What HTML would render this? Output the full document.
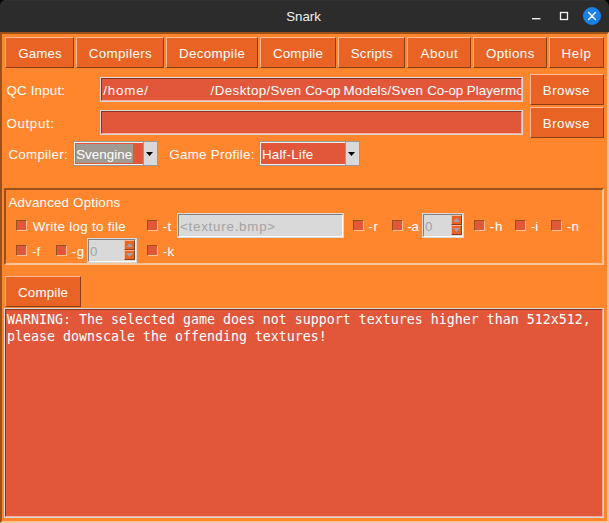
<!DOCTYPE html>
<html lang="en"><head><meta charset="utf-8"><title>Snark</title>
<style>
html,body{margin:0;padding:0;background:#000;}
body{width:609px;height:523px;position:relative;overflow:hidden;font-family:"Liberation Sans",sans-serif;font-size:13.33px;color:#FFFFFF;}
div,span{position:absolute;box-sizing:content-box;}
.t{white-space:pre;line-height:16px;height:16px;}
#tbar{left:0;top:0;width:609px;height:32px;background:#2C2C2C;border-radius:5.5px 6.5px 0 0;}
#tbar:before{content:"";position:absolute;left:4px;right:4px;top:0;height:1px;background:#313131;}
#win{left:0;top:32px;width:605px;height:487px;background:#FF862C;border:2px solid;border-color:#9A5019 #FFC296 #FFC296 #9A5019;}
.btn{background:#E96424;border:1px solid;border-color:#FFB795 #8C3C16 #8C3C16 #FFB795;}
.ent{background:#E2573A;border:1px solid;border-color:#883423 #FFAB9C #FFAB9C #883423;outline:1px solid #D9D9D9;overflow:hidden;}
.dent{background:#D9D9D9;border:1px solid;border-color:#828282 #fff #fff #828282;outline:1px solid #D9D9D9;overflow:hidden;}
.chk{width:9px;height:9px;background:#E2573A;border:1px solid;border-color:#9A5019 #FFC296 #FFC296 #9A5019;}
.sunk{border:2px solid;border-color:#9A5019 #FFC296 #FFC296 #9A5019;}
.cb{background:#E2573A;border:1px solid #F2F2F2;outline:1px solid #989898;}
.cbb{background:#D9D9D9;border-left:1px solid #989898;}
.sb{background:#E96424;border:1px solid;border-color:#FFB795 #8C3C16 #8C3C16 #FFB795;width:9px;height:8px;}
.dis{color:#A3A3A3;}
.mono{font-family:"DejaVu Sans Mono","Liberation Mono",monospace;font-size:13.29px;line-height:17px;white-space:pre;color:#FFFFFF;}
svg{position:absolute;overflow:visible;}
</style></head><body>

<div id="tbar"></div>
<span id="title" class="t" style="left:286.24px;top:9px;letter-spacing:-0.055px;color:#F0F0F0;">Snark</span>
<svg style="left:0;top:0" width="609" height="32" viewBox="0 0 609 32"><rect x="532" y="18" width="8.4" height="1.4" fill="#F0F0F0"/><rect x="560.5" y="12.5" width="7" height="7" fill="none" stroke="#F4F4F4" stroke-width="1.3"/><circle cx="592" cy="16" r="9" fill="#1B80E6"/><path d="M588.6 12.6 L595.4 19.4 M595.4 12.6 L588.6 19.4" stroke="#fff" stroke-width="1.4" stroke-linecap="round" fill="none"/></svg>
<div id="win"></div>
<div class="btn" style="left:5px;top:37px;width:67px;height:29px"></div>
<span id="b1" class="t" style="left:18.18px;top:46px;letter-spacing:0.158px;">Games</span>
<div class="btn" style="left:76px;top:37px;width:86px;height:29px"></div>
<span id="b2" class="t" style="left:88.76px;top:46px;letter-spacing:0.376px;">Compilers</span>
<div class="btn" style="left:166px;top:37px;width:90px;height:29px"></div>
<span id="b3" class="t" style="left:179.12px;top:46px;letter-spacing:0.347px;">Decompile</span>
<div class="btn" style="left:260px;top:37px;width:74px;height:29px"></div>
<span id="b4" class="t" style="left:272.96px;top:46px;letter-spacing:0.178px;">Compile</span>
<div class="btn" style="left:338px;top:37px;width:65px;height:29px"></div>
<span id="b5" class="t" style="left:350.79px;top:46px;letter-spacing:0.177px;">Scripts</span>
<div class="btn" style="left:407px;top:37px;width:62px;height:29px"></div>
<span id="b6" class="t" style="left:420.47px;top:46px;letter-spacing:0.610px;">About</span>
<div class="btn" style="left:473px;top:37px;width:72px;height:29px"></div>
<span id="b7" class="t" style="left:485.91px;top:46px;letter-spacing:0.412px;">Options</span>
<div class="btn" style="left:549px;top:37px;width:53px;height:29px"></div>
<span id="b8" class="t" style="left:561.50px;top:46px;letter-spacing:0.673px;">Help</span>
<span id="l_qc" class="t" style="left:6.39px;top:83px;letter-spacing:0.203px;">QC Input:</span>
<div class="ent" style="left:101px;top:78px;width:419px;height:21px"></div>
<div style="left:102px;top:79px;width:419px;height:21px;overflow:hidden">
<span id="e_home" class="t" style="left:1.24px;top:4px;letter-spacing:0.816px;">/home/</span>
<span class="t" style="left:108.50px;top:4px;letter-spacing:0.438px">/Desktop</span>
<span class="t" style="left:164.60px;top:4px;letter-spacing:0.152px">/Sven </span>
<span class="t" style="left:203.30px;top:4px;letter-spacing:-0.284px">Co-op </span>
<span class="t" style="left:241.60px;top:4px;letter-spacing:0.139px">Models</span>
<span class="t" style="left:285.40px;top:4px;letter-spacing:0.336px">/Sven </span>
<span class="t" style="left:325.20px;top:4px;letter-spacing:-0.084px">Co-op </span>
<span class="t" style="left:364.70px;top:4px;letter-spacing:0.088px">Playermodels</span>
</div>
<div class="btn" style="left:530px;top:74px;width:72px;height:29px"></div>
<span id="br1" class="t" style="left:542.82px;top:83px;letter-spacing:0.442px;">Browse</span>
<span id="l_out" class="t" style="left:6.39px;top:116px;letter-spacing:0.662px;">Output:</span>
<div class="ent" style="left:101px;top:111px;width:419px;height:21px"></div>
<div class="btn" style="left:530px;top:107px;width:72px;height:29px"></div>
<span id="br2" class="t" style="left:542.82px;top:116px;letter-spacing:0.442px;">Browse</span>
<span id="l_comp" class="t" style="left:8.42px;top:147px;letter-spacing:0.278px;">Compiler:</span>
<div class="cb" style="left:74px;top:142px;width:81px;height:21px"></div>
<div style="left:76px;top:144px;width:57px;height:19px;background:#9F9B93"></div>
<span id="c_sv" class="t" style="left:76.14px;top:147px;letter-spacing:0.071px;">Svengine</span>
<div class="cbb" style="left:143px;top:142px;width:13px;height:23px"></div>
<svg style="left:146px;top:152px" width="7" height="4" viewBox="0 0 7 4"><path d="M0 0H7L3.5 4Z" fill="#000"/></svg>
<span id="l_gp" class="t" style="left:169.31px;top:147px;letter-spacing:0.302px;">Game Profile:</span>
<div class="cb" style="left:260px;top:142px;width:97px;height:21px"></div>
<span id="c_hl" class="t" style="left:261.96px;top:147px;letter-spacing:0.211px;">Half-Life</span>
<div class="cbb" style="left:345px;top:142px;width:13px;height:23px"></div>
<svg style="left:348px;top:152px" width="7" height="4" viewBox="0 0 7 4"><path d="M0 0H7L3.5 4Z" fill="#000"/></svg>
<div class="sunk" style="left:4px;top:188px;width:596px;height:73px"></div>
<span id="l_adv" class="t" style="left:8.42px;top:195px;letter-spacing:0.190px;">Advanced Options</span>
<div class="chk" style="left:16px;top:220px"></div>
<span id="k_log" class="t" style="left:32.81px;top:219px;letter-spacing:0.306px;">Write log to file</span>
<div class="chk" style="left:147px;top:220px"></div>
<span id="k_t" class="t" style="left:162.75px;top:219px;letter-spacing:0.430px;">-t</span>
<div class="dent" style="left:178px;top:214px;width:163px;height:21px"></div>
<span id="e_tex" class="t dis" style="left:179.97px;top:219px;letter-spacing:0.769px;">&lt;texture.bmp&gt;</span>
<div class="chk" style="left:353px;top:220px"></div>
<span id="k_r" class="t" style="left:368.49px;top:219px;letter-spacing:0.630px;">-r</span>
<div class="chk" style="left:392px;top:220px"></div>
<span id="k_a" class="t" style="left:407.59px;top:219px;letter-spacing:-0.550px;">-a</span>
<div class="dent" style="left:423px;top:214px;width:38px;height:21px"></div>
<div class="sb" style="left:451px;top:215px"></div>
<div class="sb" style="left:451px;top:225px"></div>
<svg style="left:453px;top:218px" width="7" height="4" viewBox="0 0 7 4"><path d="M0 4H7L3.5 0Z" fill="#A3A3A3"/></svg>
<svg style="left:453px;top:228px" width="7" height="4" viewBox="0 0 7 4"><path d="M0 0H7L3.5 4Z" fill="#A3A3A3"/></svg>
<span id="s_a" class="t dis" style="left:425.07px;top:219px;letter-spacing:0.000px;">0</span>
<div class="chk" style="left:474px;top:220px"></div>
<span id="k_h" class="t" style="left:489.71px;top:219px;letter-spacing:0.760px;">-h</span>
<div class="chk" style="left:515px;top:220px"></div>
<span id="k_i" class="t" style="left:530.84px;top:219px;letter-spacing:0.080px;">-i</span>
<div class="chk" style="left:551px;top:220px"></div>
<span id="k_n" class="t" style="left:566.82px;top:219px;letter-spacing:0.350px;">-n</span>
<div class="chk" style="left:16px;top:245px"></div>
<span id="k_f" class="t" style="left:32.15px;top:244px;letter-spacing:0.040px;">-f</span>
<div class="chk" style="left:56px;top:245px"></div>
<span id="k_g" class="t" style="left:71.84px;top:244px;letter-spacing:0.600px;">-g</span>
<div class="dent" style="left:88px;top:239px;width:46px;height:21px"></div>
<div class="sb" style="left:124px;top:240px"></div>
<div class="sb" style="left:124px;top:250px"></div>
<svg style="left:126px;top:243px" width="7" height="4" viewBox="0 0 7 4"><path d="M0 4H7L3.5 0Z" fill="#A3A3A3"/></svg>
<svg style="left:126px;top:253px" width="7" height="4" viewBox="0 0 7 4"><path d="M0 0H7L3.5 4Z" fill="#A3A3A3"/></svg>
<span id="s_g" class="t dis" style="left:90.07px;top:244px;letter-spacing:0.000px;">0</span>
<div class="chk" style="left:147px;top:245px"></div>
<span id="k_k" class="t" style="left:162.75px;top:244px;letter-spacing:0.280px;">-k</span>
<div class="btn" style="left:5px;top:276px;width:74px;height:29px"></div>
<span id="bc" class="t" style="left:18.02px;top:285px;letter-spacing:0.173px;">Compile</span>
<div class="ent" style="left:5px;top:309px;width:596px;height:206px"></div>
<div id="log" class="mono" style="left:7px;top:311px">WARNING: The selected game does not support textures higher than 512x512,
please downscale the offending textures!</div>
</body></html>
